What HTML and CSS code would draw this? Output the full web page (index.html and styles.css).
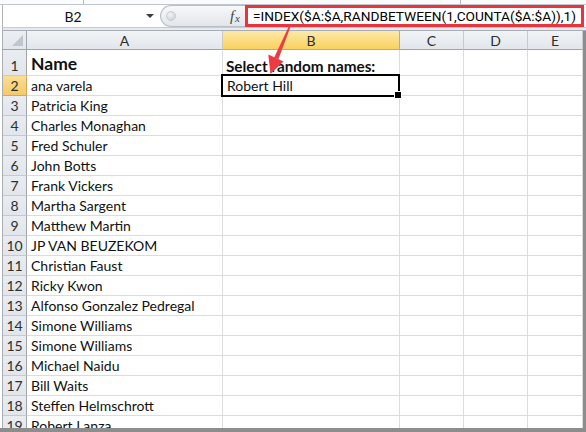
FILE: index.html
```html
<!DOCTYPE html>
<html>
<head>
<meta charset="utf-8">
<link rel="stylesheet" href="styles.css">
</head>
<body>
<div class="app">
  <div class="topstrip"><span class="seg seg1"></span><span class="seg seg2"></span></div>
  <div class="fbar">
    <div class="namebox"><span class="nb-text">B2</span><span class="nb-drop"><span class="tri"></span></span></div>
    <div class="fx-area"><span class="knob"></span><span class="fx"><span class="fx-f">f</span><span class="fx-x">x</span></span></div>
    <div class="formula"><span class="ftext">=INDEX($A:$A,RANDBETWEEN(1,COUNTA($A:$A)),1)</span></div>
  </div>
  <div class="gap"></div>
  <div class="sheet">
    <div class="grid">
      <div class="row hdr">
        <div class="c rh corner"><span class="corner-tri"></span></div>
        <div class="c ca ch">A</div>
        <div class="c cb ch chsel">B</div>
        <div class="c cc ch">C</div>
        <div class="c cd ch">D</div>
        <div class="c ce ch">E</div>
      </div>
      <div class="row r1">
        <div class="c rh">1</div>
        <div class="c ca title">Name</div>
        <div class="c cb bold">Select random names:</div>
        <div class="c cc"></div><div class="c cd"></div><div class="c ce"></div>
      </div>
      <div class="row">
        <div class="c rh rhsel">2</div>
        <div class="c ca">ana varela</div>
        <div class="c cb sel">Robert Hill</div>
        <div class="c cc"></div><div class="c cd"></div><div class="c ce"></div>
      </div>
      <div class="row"><div class="c rh">3</div><div class="c ca">Patricia King</div><div class="c cb"></div><div class="c cc"></div><div class="c cd"></div><div class="c ce"></div></div>
      <div class="row"><div class="c rh">4</div><div class="c ca">Charles Monaghan</div><div class="c cb"></div><div class="c cc"></div><div class="c cd"></div><div class="c ce"></div></div>
      <div class="row"><div class="c rh">5</div><div class="c ca">Fred Schuler</div><div class="c cb"></div><div class="c cc"></div><div class="c cd"></div><div class="c ce"></div></div>
      <div class="row"><div class="c rh">6</div><div class="c ca">John Botts</div><div class="c cb"></div><div class="c cc"></div><div class="c cd"></div><div class="c ce"></div></div>
      <div class="row"><div class="c rh">7</div><div class="c ca">Frank Vickers</div><div class="c cb"></div><div class="c cc"></div><div class="c cd"></div><div class="c ce"></div></div>
      <div class="row"><div class="c rh">8</div><div class="c ca">Martha Sargent</div><div class="c cb"></div><div class="c cc"></div><div class="c cd"></div><div class="c ce"></div></div>
      <div class="row"><div class="c rh">9</div><div class="c ca">Matthew Martin</div><div class="c cb"></div><div class="c cc"></div><div class="c cd"></div><div class="c ce"></div></div>
      <div class="row"><div class="c rh">10</div><div class="c ca">JP VAN BEUZEKOM</div><div class="c cb"></div><div class="c cc"></div><div class="c cd"></div><div class="c ce"></div></div>
      <div class="row"><div class="c rh">11</div><div class="c ca">Christian Faust</div><div class="c cb"></div><div class="c cc"></div><div class="c cd"></div><div class="c ce"></div></div>
      <div class="row"><div class="c rh">12</div><div class="c ca">Ricky Kwon</div><div class="c cb"></div><div class="c cc"></div><div class="c cd"></div><div class="c ce"></div></div>
      <div class="row"><div class="c rh">13</div><div class="c ca">Alfonso Gonzalez Pedregal</div><div class="c cb"></div><div class="c cc"></div><div class="c cd"></div><div class="c ce"></div></div>
      <div class="row"><div class="c rh">14</div><div class="c ca">Simone Williams</div><div class="c cb"></div><div class="c cc"></div><div class="c cd"></div><div class="c ce"></div></div>
      <div class="row"><div class="c rh">15</div><div class="c ca">Simone Williams</div><div class="c cb"></div><div class="c cc"></div><div class="c cd"></div><div class="c ce"></div></div>
      <div class="row"><div class="c rh">16</div><div class="c ca">Michael Naidu</div><div class="c cb"></div><div class="c cc"></div><div class="c cd"></div><div class="c ce"></div></div>
      <div class="row"><div class="c rh">17</div><div class="c ca">Bill Waits</div><div class="c cb"></div><div class="c cc"></div><div class="c cd"></div><div class="c ce"></div></div>
      <div class="row"><div class="c rh">18</div><div class="c ca">Steffen Helmschrott</div><div class="c cb"></div><div class="c cc"></div><div class="c cd"></div><div class="c ce"></div></div>
      <div class="row"><div class="c rh">19</div><div class="c ca">Robert Lanza</div><div class="c cb"></div><div class="c cc"></div><div class="c cd"></div><div class="c ce"></div></div>
    </div>
    <div class="rbar"></div>
  </div>
  <div class="bottombar"></div>
  <svg class="arrow" width="586" height="432" viewBox="0 0 586 432">
    <polygon points="289,26 290.6,26.6 278.4,59.2 274.2,57.6" fill="#ee3a43"/>
    <polygon points="283.5,61.5 270.5,74 268.3,54.5" fill="#ee3a43"/>
  </svg>
</div>
</body>
</html>
```

FILE: styles.css
```css
* { box-sizing: border-box; }
html, body { margin: 0; padding: 0; }
body {
  width: 586px;
  height: 432px;
  overflow: hidden;
  background: #ffffff;
  font-family: Lato, "Open Sans", sans-serif;
  color: #111;
}
.app {
  position: relative;
  width: 586px;
  height: 432px;
  display: flex;
  flex-direction: column;
}
.topstrip {
  flex: none;
  height: 5px;
  display: flex;
  background: #fafbfc;
  border-bottom: 1px solid #c2c7cd;
}
.seg { height: 4px; border-right: 1px solid #b3b8be; }
.seg1 { width: 84px; }
.seg2 { width: 377px; }

.fbar {
  flex: none;
  height: 22px;
  display: flex;
  margin-left: 2px;
  border-left: 1px solid #aeb3ba;
  background: #ffffff;
}
.namebox {
  width: 157px;
  display: flex;
  align-items: center;
  background: #fff;
}
.nb-text {
  width: 140px;
  text-align: center;
  font-size: 14px;
  color: #111;
}
.nb-drop {
  width: 17px;
  display: flex;
  justify-content: center;
  align-items: center;
}
.tri {
  width: 0; height: 0;
  border-left: 4px solid transparent;
  border-right: 4px solid transparent;
  border-top: 4px solid #3a3a3a;
  margin-left: -4px;
}
.fx-area {
  width: 85px;
  display: flex;
  align-items: center;
  justify-content: space-between;
  padding: 0 5px 0 5px;
  border-radius: 11px 0 0 11px;
  border: 1px solid #b9bec5;
  border-right: none;
  background: linear-gradient(#f7f8fa, #e2e6eb);
}
.knob {
  width: 10px;
  height: 10px;
  border-radius: 50%;
  background: radial-gradient(circle at 40% 35%, #f4f5f7, #c3c8ce);
  border: 1px solid #c9ced4;
}
.fx {
  font-family: "Liberation Serif", serif;
  font-style: italic;
  color: #444;
  font-size: 15px;
  line-height: 1;
  display: flex;
  align-items: flex-end;
}
.fx-x { font-size: 11px; margin-left: 1px; }
.formula {
  width: 339px;
  border: 3px solid #e8343c;
  padding-left: 5px;
  white-space: nowrap;
  overflow: hidden;
  display: flex;
  align-items: center;
}
.ftext {
  font-family: Roboto, Lato, sans-serif;
  font-size: 13.7px;
  line-height: 16px;
  color: #000;
}
.gap {
  flex: none;
  height: 4px;
  margin-left: 2px;
  border-left: 1px solid #aeb3ba;
  border-top: 1px solid #c7ccd2;
  border-bottom: 1px solid #a9aeb5;
  background: #e7eaee;
}
.sheet {
  flex: none;
  height: 397px;
  display: flex;
}
.grid {
  width: 583px;
  margin-left: 2px;
  border-left: 1px solid #a9aeb5;
  overflow: hidden;
}
.rbar { width: 3px; background: #8d8d8d; }
.bottombar { flex: none; height: 4px; background: #8d8d8d; }

.row { display: flex; height: 20px; }
.row.hdr { height: 19px; }
.row.r1 { height: 26px; }

.c {
  flex: none;
  height: 100%;
  border-right: 1px solid #dadcdf;
  border-bottom: 1px solid #dadcdf;
  display: flex;
  align-items: flex-end;
  padding: 0 3px 1px 4px;
  white-space: nowrap;
  overflow: hidden;
  font-size: 14px;
  line-height: 17px;
  color: #111;
}
.rh {
  width: 24px;
  justify-content: center;
  padding: 0 0 1px 0;
  background: linear-gradient(#e9ecf0, #e2e6eb);
  border-right: 1px solid #9ea5ad;
  border-bottom: 1px solid #c5cad1;
  color: #2e2e2e;
  font-size: 14px;
}
.rhsel {
  background: linear-gradient(#f9dd97, #f5c968);
  border-right: 1px solid #e3a444;
  border-bottom: 1px solid #e3a444;
}
.ca { width: 196px; }
.cb { width: 177px; }
.cc { width: 64px; }
.cd { width: 64px; }
.ce { width: 55px; }

.ch {
  justify-content: center;
  align-items: center;
  padding: 0;
  background: linear-gradient(#f1f3f6, #e2e6eb);
  border-right: 1px solid #c5cad1;
  border-bottom: 1px solid #9ea5ad;
  color: #2e2e2e;
  font-size: 14px;
}
.chsel {
  background: linear-gradient(#fdeaa6, #f9d15f);
  border-right: 1px solid #e3a444;
  border-bottom: 1px solid #e3a444;
}
.corner {
  background: linear-gradient(#eceef2, #e2e6eb);
  border-bottom: 1px solid #9ea5ad;
  justify-content: flex-end;
  align-items: flex-end;
  padding: 0 3px 3px 0;
}
.corner-tri {
  width: 11px;
  height: 11px;
  background: #c0c5cb;
  clip-path: polygon(100% 0, 100% 100%, 0 100%);
}
.title {
  font-weight: bold;
  font-size: 17.5px;
  line-height: 21px;
  padding-bottom: 1px;
}
.bold { font-weight: bold; font-size: 15.3px; padding-bottom: 0; padding-left: 3px; }
.sel { position: relative; overflow: visible; }
.sel::after {
  content: "";
  position: absolute;
  left: -2px;
  top: -2px;
  right: -1px;
  bottom: -2px;
  border: 2px solid #000;
}
.sel::before {
  content: "";
  position: absolute;
  right: -3px;
  bottom: -4px;
  width: 6px;
  height: 6px;
  background: #000;
  border: 1px solid #fff;
  z-index: 2;
}
.arrow {
  position: absolute;
  left: 0;
  top: 0;
  pointer-events: none;
}
```
